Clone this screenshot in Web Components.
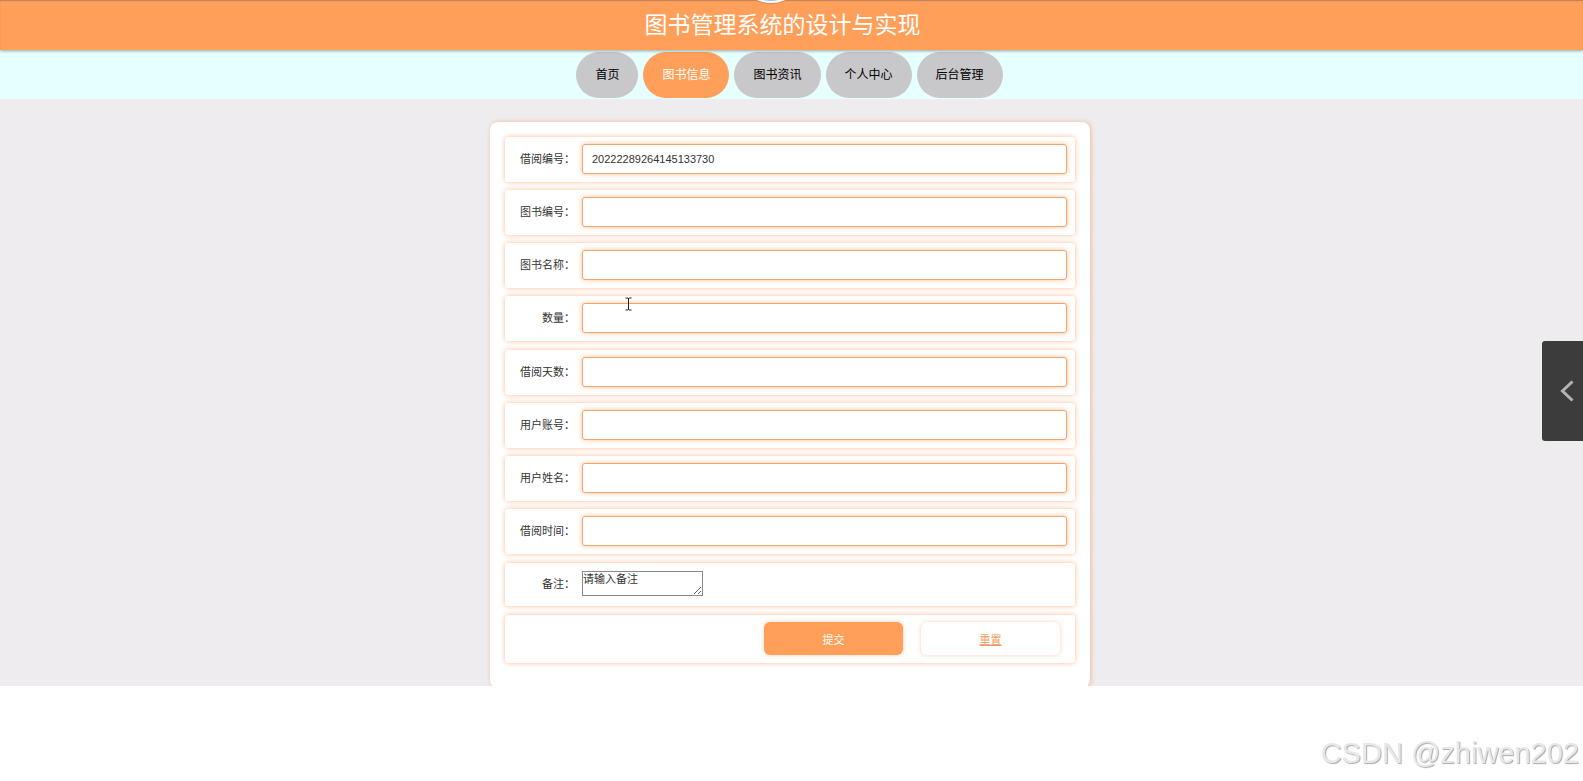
<!DOCTYPE html>
<html lang="zh-CN">
<head>
<meta charset="utf-8">
<title>图书管理系统的设计与实现</title>
<style>
body {
  margin: 0;
  background: #fff;
  color: #333;
  font-family: "Liberation Sans", "Noto Sans CJK SC", sans-serif;
  font-size: 11px;
  --main: #ff9f5a;
}
</style>
</head>
<body>
<library-page></library-page>

<script>
class SiteHeader extends HTMLElement {
  constructor() {
    super();
    this.attachShadow({ mode: 'open' }).innerHTML = `
<style>
:host {
  display: flex;
  justify-content: center;
  position: relative;
  z-index: 1;
  height: 50px;
  background: var(--main);
  box-shadow: 0 1px 3px rgba(0, 0, 0, .35), inset 0 1px 1px rgba(120, 100, 90, .5);
}
h1 {
  margin: 0;
  padding-right: 18px;
  color: #fff;
  font-size: 23px;
  font-weight: 400;
  line-height: 50px;
}
.logo {
  position: absolute;
  top: 0;
  left: 50%;
  margin-left: -38px;
}
</style>
<svg class="logo" width="34" height="5" viewBox="0 0 34 5" aria-hidden="true">
  <circle cx="17" cy="-30" r="34" fill="#d98a55"/>
  <circle cx="17" cy="-31" r="34" fill="#fff"/>
  <circle cx="17" cy="-31" r="32" fill="#8cc8ea"/>
</svg>
<h1><slot></slot></h1>`;
  }
}

class NavItem extends HTMLElement {
  constructor() {
    super();
    this.attachShadow({ mode: 'open' }).innerHTML = `
<style>
:host {
  display: block;
}
a {
  display: block;
  padding: 0 19px;
  border-radius: 23px;
  background: #c8c7c9;
  color: #000;
  font-size: 12px;
  line-height: 46px;
  text-decoration: none;
}
:host([active]) a {
  background: var(--main);
  color: #fff;
}
</style>
<a href="#"><slot></slot></a>`;
  }
}

class SiteNav extends HTMLElement {
  constructor() {
    super();
    this.attachShadow({ mode: 'open' }).innerHTML = `
<style>
:host {
  display: block;
  background: #e6ffff;
}
nav {
  display: flex;
  justify-content: center;
  gap: 5px;
  padding: 2px 4px 1px 0;
}
</style>
<nav><slot></slot></nav>`;
  }
}

class FormRow extends HTMLElement {
  constructor() {
    super();
    const label = this.getAttribute('label');
    const value = this.getAttribute('value') || '';
    const control = this.hasAttribute('multiline')
      ? `<textarea id="field">${value}</textarea>`
      : `<input id="field" type="text" value="${value}">`;
    this.attachShadow({ mode: 'open' }).innerHTML = `
<style>
:host {
  display: flex;
  align-items: center;
  gap: 7px;
  padding: 7px 8px 8px;
  border-radius: 3px;
  background: #fff;
  box-shadow: 0 0 5px rgba(255, 140, 70, .6);
}
label {
  width: 62px;
  text-align: right;
  line-height: 16px;
}
input, textarea {
  box-sizing: border-box;
  margin: 0;
  outline: none;
  color: #333;
  font: inherit;
}
input {
  flex: 1;
  min-width: 0;
  height: 30px;
  padding: 0 9px;
  border: 1px solid #eda676;
  border-radius: 3px;
  background: #fff;
  box-shadow: 0 0 5px rgba(255, 150, 60, .6);
}
textarea {
  width: 121px;
  height: 25px;
  padding: 0;
  border: 1px solid #888;
  overflow: hidden;
  line-height: 15px;
}
:host([multiline]) {
  padding: 8px 8px 10px;
}
</style>
<label for="field">${label}</label>
${control}`;
  }
}

class FormActions extends HTMLElement {
  constructor() {
    super();
    this.attachShadow({ mode: 'open' }).innerHTML = `
<style>
:host {
  display: flex;
  justify-content: flex-end;
  gap: 18px;
  padding: 7px 15px 8px;
  border-radius: 3px;
  background: #fff;
  box-shadow: 0 0 5px rgba(255, 140, 70, .6);
}
button {
  width: 139px;
  height: 33px;
  padding: 0;
  border: 0;
  border-radius: 6px;
  background: #fff;
  color: #ee9c5e;
  font: inherit;
  text-decoration: underline;
  box-shadow: 0 0 4px rgba(255, 140, 70, .4);
}
.submit {
  background: var(--main);
  color: #fff;
  text-decoration: none;
}
</style>
<button class="submit" type="button">提交</button>
<button type="reset">重置</button>`;
  }
}

class BorrowForm extends HTMLElement {
  constructor() {
    super();
    this.attachShadow({ mode: 'open' }).innerHTML = `
<style>
:host {
  display: block;
  box-sizing: border-box;
  width: 100%;
  max-width: 600px;
  padding: 15px 15px 25px;
  border-radius: 8px;
  background: #fff;
  box-shadow: 1px 0 4px rgba(240, 150, 90, .6);
}
form, .fields {
  display: grid;
  gap: 9px;
}
.fields {
  gap: 8px;
}
</style>
<form>
  <div class="fields">
    <form-row label="借阅编号：" value="20222289264145133730"></form-row>
    <form-row label="图书编号："></form-row>
    <form-row label="图书名称："></form-row>
    <form-row label="数量："></form-row>
  </div>
  <div class="fields">
    <form-row label="借阅天数："></form-row>
    <form-row label="用户账号："></form-row>
    <form-row label="用户姓名："></form-row>
    <form-row label="借阅时间："></form-row>
  </div>
  <form-row label="备注：" value="请输入备注" multiline></form-row>
  <form-actions></form-actions>
</form>`;
  }
}

class SideToggle extends HTMLElement {
  constructor() {
    super();
    this.attachShadow({ mode: 'open' }).innerHTML = `
<style>
:host {
  position: fixed;
  top: 50%;
  right: 0;
  transform: translateY(-50%);
}
button {
  display: flex;
  align-items: center;
  justify-content: flex-end;
  width: 41px;
  height: 100px;
  padding: 0 9px 0 0;
  border: 0;
  border-radius: 3px 0 0 3px;
  background: #3c3c3c;
}
</style>
<button type="button" aria-label="展开">
  <svg width="14" height="22" viewBox="0 0 14 22" fill="none" stroke="#b4b4b4" stroke-width="3">
    <path d="M12.500 1.500 L2.500 11 L12.500 20.500"/>
  </svg>
</button>`;
  }
}

class PageMark extends HTMLElement {
  constructor() {
    super();
    this.attachShadow({ mode: 'open' }).innerHTML = `
<style>
:host {
  position: fixed;
  right: 4px;
  bottom: 11px;
  color: #e8e8e8;
  font-size: 29px;
  line-height: 34px;
  text-shadow: 1px 1px 1px #aaa;
}
</style>
<slot></slot>`;
  }
}

class LibraryPage extends HTMLElement {
  constructor() {
    super();
    this.attachShadow({ mode: 'open' }).innerHTML = `
<style>
:host {
  display: block;
}
main {
  display: flex;
  justify-content: center;
  padding-top: 23px;
  overflow: hidden;
  background: #eeecee;
}
borrow-form {
  margin: 0 3px -2px 0;
}
.cursor {
  position: absolute;
  top: 297px;
  left: 50%;
  margin-left: -167px;
}
</style>
<site-header>图书管理系统的设计与实现</site-header>
<site-nav>
  <nav-item>首页</nav-item>
  <nav-item active>图书信息</nav-item>
  <nav-item>图书资讯</nav-item>
  <nav-item>个人中心</nav-item>
  <nav-item>后台管理</nav-item>
</site-nav>
<main><borrow-form></borrow-form></main>
<side-toggle></side-toggle>
<page-mark>CSDN @zhiwen202</page-mark>
<svg class="cursor" width="7" height="14" viewBox="0 0 7 14" fill="none" stroke="#222" aria-hidden="true">
  <path d="M0.500 1 H3 M4 1 H6.500 M3.500 1 V13 M0.500 13 H3 M4 13 H6.500"/>
</svg>`;
  }
}

customElements.define('site-header', SiteHeader);
customElements.define('nav-item', NavItem);
customElements.define('site-nav', SiteNav);
customElements.define('form-row', FormRow);
customElements.define('form-actions', FormActions);
customElements.define('borrow-form', BorrowForm);
customElements.define('side-toggle', SideToggle);
customElements.define('page-mark', PageMark);
customElements.define('library-page', LibraryPage);
</script>
</body>
</html>
